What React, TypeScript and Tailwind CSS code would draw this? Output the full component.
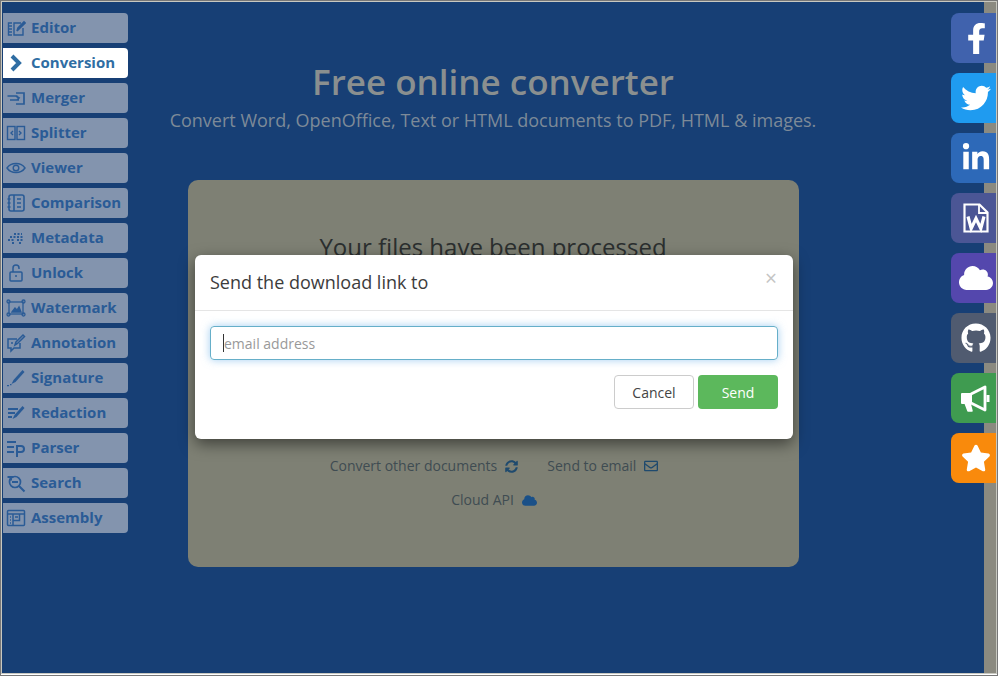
import React from 'react';
import { FaCloud, FaFacebookF, FaGithub, FaLinkedinIn, FaRegEnvelope, FaStar, FaSyncAlt, FaTwitter } from 'react-icons/fa';

const iconProps = { width: 20, height: 20, viewBox: '0 0 20 20', fill: 'none', stroke: 'currentColor', strokeWidth: 1.4 };

const navIcons: Record<string, React.ReactNode> = {
  Editor: (
    <svg {...iconProps}>
      <path d="M6 5H2.500v12H6M2.500 8H6M2.500 11H6M2.500 14H6" />
      <path d="M15 5H8v12h9v-7" />
      <path d="M11 13l1-3 6-6 1 1-6 6z" strokeWidth="1.600" />
    </svg>
  ),
  Conversion: (
    <svg width="20" height="20" viewBox="0 0 20 20" fill="none" stroke="currentColor" strokeWidth="4">
      <path d="M6 3l7 7-7 7" />
    </svg>
  ),
  Merger: (
    <svg {...iconProps} strokeWidth="1.700">
      <path d="M10 5h8v11h-8" />
      <path d="M1.500 8h10M4 12h9M10 8l3 2-2 2" />
    </svg>
  ),
  Splitter: (
    <svg {...iconProps}>
      <rect x="1.500" y="3.500" width="7.500" height="13" />
      <rect x="11" y="3.500" width="7.500" height="13" />
      <path d="M7 8l-2 2 2 2M13 8l2 2-2 2" />
    </svg>
  ),
  Viewer: (
    <svg {...iconProps}>
      <path d="M1 10c4-6 14-6 18 0-4 6-14 6-18 0z" />
      <circle cx="10" cy="10" r="2.800" />
    </svg>
  ),
  Comparison: (
    <svg {...iconProps} strokeWidth="1.600">
      <rect x="3" y="2" width="15" height="16" rx="2" />
      <path d="M8 2v16M11 6h4M11 10h4M11 14h4M1.500 6h3M1.500 10h3M1.500 14h3" />
    </svg>
  ),
  Metadata: (
    <svg {...iconProps} strokeWidth="2" strokeDasharray="2 1.500">
      <path d="M8 6h8M4 9h14M2 12h6M11 12h7M6 15h3M13 15h2" />
    </svg>
  ),
  Unlock: (
    <svg {...iconProps} strokeWidth="1.500">
      <rect x="4" y="9" width="12" height="9" rx="1" />
      <path d="M7 9V5a3 3 0 0 1 6 0v1M9 13h2" />
    </svg>
  ),
  Watermark: (
    <svg {...iconProps} strokeWidth="1.300">
      <rect x="3" y="4" width="14" height="12" />
      <path d="M6 14l3-4 2 2 2-3 2 5z" fill="currentColor" />
      <circle cx="2.500" cy="3.500" r="1.500" />
      <circle cx="17.500" cy="3.500" r="1.500" />
      <circle cx="2.500" cy="16.500" r="1.500" />
      <circle cx="17.500" cy="16.500" r="1.500" />
    </svg>
  ),
  Annotation: (
    <svg {...iconProps} strokeWidth="1.500">
      <path d="M11 6H2v9h3v3l3-3h6v-5" />
      <path d="M9 12l1-3 7-7 1.500 1.500-7 7z" />
      <path d="M5 10h2" />
    </svg>
  ),
  Signature: (
    <svg width="20" height="20" viewBox="0 0 20 20" fill="currentColor">
      <path d="M16.500 2l2 2-9 10-4 2 2-4z" />
      <path d="M1 17h2v1.300H1zM4 16h1.500v1.300H4z" />
    </svg>
  ),
  Redaction: (
    <svg width="20" height="20" viewBox="0 0 20 20" fill="currentColor">
      <path d="M2 5h10v2H2zM2 9h7v2H2zM2 13h4v2H2z" />
      <path d="M16.500 3l2 2-8 9-4 2 2-4z" />
    </svg>
  ),
  Parser: (
    <svg width="20" height="20" viewBox="0 0 20 20" fill="currentColor">
      <path d="M1 3h9v2H1zM1 8h7v2H1zM1 13h7v2H1z" />
      <path fillRule="evenodd" d="M10 7h5a4 4 0 0 1 0 8h-3v4h-2zm2 2v4h3a2 2 0 0 0 0-4z" />
    </svg>
  ),
  Search: (
    <svg {...iconProps} strokeWidth="1.700">
      <circle cx="9" cy="9" r="5.500" />
      <path d="M13 13l5.500 5.500M1.500 4h6M6 9h6M3 6.500h3" strokeWidth="2" />
    </svg>
  ),
  Assembly: (
    <svg {...iconProps} strokeWidth="1.500">
      <rect x="1.500" y="2.500" width="17" height="15" rx="1" />
      <path d="M1.500 6h17M7 6v11.500M13.500 6v6.500H7M4 9h1M4 12h1M4 15h1M9 9h3" />
    </svg>
  ),
};

const navItems = ['Editor', 'Conversion', 'Merger', 'Splitter', 'Viewer', 'Comparison', 'Metadata', 'Unlock', 'Watermark', 'Annotation', 'Signature', 'Redaction', 'Parser', 'Search', 'Assembly'];

const socials = [
  { color: 'bg-[#4062ad]', icon: <FaFacebookF size={31} /> },
  { color: 'bg-[#1f9bf0]', icon: <FaTwitter size={30} /> },
  { color: 'bg-[#2d69b8]', icon: <FaLinkedinIn size={30} /> },
  {
    color: 'bg-[#4b5695]',
    icon: (
      <svg width="26" height="30" viewBox="0 0 26 30" fill="none" stroke="white" strokeWidth="2.200">
        <path d="M1.500 1.500h15l8 8v19h-23z" />
        <path d="M16 1.500v8.500h8.500" strokeWidth="1.800" />
        <path d="M5 13.500l3.200 12 4.800-10 4.800 10 3.200-12" strokeWidth="3.200" />
      </svg>
    ),
  },
  { color: 'bg-[#5447ad]', icon: <FaCloud size={34} /> },
  { color: 'bg-[#505b70]', icon: <FaGithub size={30} /> },
  {
    color: 'bg-[#3f9b50]',
    icon: (
      <svg width="32" height="30" viewBox="0 0 32 30" fill="white" stroke="white" strokeLinejoin="round">
        <path d="M2 11h9v9H2z" strokeWidth="2" />
        <path d="M11 11l14-7v23l-14-7" fill="none" strokeWidth="2.800" />
        <path d="M5 20h5l2 8H8z" strokeWidth="1.500" />
        <path d="M28 12v7" fill="none" strokeWidth="3" />
      </svg>
    ),
  },
  { color: 'bg-[#f98a0c]', icon: <FaStar size={30} /> },
];

export default function App() {
  return (
    <div className="relative h-[676px] w-[998px] overflow-hidden border border-[#777] font-['Open_Sans',sans-serif]">
      <div className="flex h-[673px] w-[996px] border border-[#c8c8c0]">
        <div className="flex h-full flex-1 bg-[#173f75]">
          {/* Sidebar */}
          <nav className="flex w-[126px] shrink-0 flex-col gap-[5px] pl-px pt-[11px]">
            {navItems.map(name => {
              const active = name === 'Conversion';
              return (
                <div
                  key={name}
                  className={`flex h-[30px] items-center gap-[5px] rounded-r-[4px] pl-[3px] text-[15px] font-bold ${active ? 'bg-white text-[#2f6da3]' : 'bg-[#8394ae] text-[#2a5b96]'}`}
                >
                  <span className="flex w-[20px] justify-center">{navIcons[name]}</span>
                  <span className="pb-[2px]">{name}</span>
                </div>
              );
            })}
          </nav>

          {/* Main */}
          <main className="flex min-w-0 flex-1 flex-col items-center pt-[58px]">
            <h1 className="whitespace-nowrap text-center text-[35px] font-semibold leading-[44px] text-[#8a8f8f]">Free online converter</h1>
            <p className="mt-px whitespace-nowrap text-center text-[18px] leading-[30px] text-[#7d8a98]">Convert Word, OpenOffice, Text or HTML documents to PDF, HTML &amp; images.</p>
            <section className="mt-[45px] flex h-[387px] w-[611px] shrink-0 flex-col items-center rounded-[10px] bg-[#7e8074] pt-[50px]">
              <h2 className="text-[24px] leading-[34px] text-[#2b2f2f]">Your files have been processed</h2>
              <div className="mt-[192px] flex gap-[29px] pl-[2px] text-[14px] leading-[20px] text-[#3f4c52]">
                <span className="flex items-center gap-[8px]">Convert other documents <FaSyncAlt size={13} className="text-[#1f4a6e]" /></span>
                <span className="flex items-center gap-[8px]">Send to email <FaRegEnvelope size={14} className="text-[#1f4a6e]" /></span>
              </div>
              <div className="mt-[14px] flex items-center gap-[8px] pl-[2px] text-[14px] leading-[20px] text-[#3f4c52]">
                Cloud API <FaCloud size={15} className="text-[#1a5088]" />
              </div>
            </section>
          </main>

          <div className="w-[126px] shrink-0" />
        </div>

        {/* Scrollbar track */}
        <div className="h-full w-[12px] shrink-0 bg-[#8b8a80]" />
      </div>

      {/* Floating social buttons */}
      <div className="absolute left-[950px] top-[12px] flex flex-col gap-[10px]">
        {socials.map((s, i) => (
          <div key={i} className={`h-[50px] w-[45px] overflow-hidden rounded-l-[8px] text-white ${s.color}`}>
            <div className="flex h-[50px] w-[50px] items-center justify-center">{s.icon}</div>
          </div>
        ))}
      </div>

      {/* Modal */}
      <div className="absolute left-[194px] top-[254px] h-[184px] w-[598px] rounded-[6px] bg-white shadow-[0_5px_15px_rgba(0,0,0,0.5)]">
        <div className="flex h-[56px] items-center justify-between border-b border-[#e5e5e5] px-[15px]">
          <span className="text-[18px] text-[#3c3c3c]">Send the download link to</span>
          <span className="-mt-[8px] mr-[1px] text-[21px] leading-none text-[#c4c4c4]">×</span>
        </div>
        <div className="px-[15px] pt-[15px]">
          <div className="flex h-[34px] items-center rounded-[4px] border border-[#66afc9] pl-[12px] text-[14px] text-[#999] shadow-[0_0_8px_rgba(102,175,233,0.6)]">
            <span className="h-[18px] w-px bg-[#333]" />
            <span>email address</span>
          </div>
          <div className="mt-[15px] flex justify-end gap-[4px] text-[14px]">
            <button className="h-[34px] w-[80px] rounded-[4px] border border-[#ccc] bg-white text-[#444]">Cancel</button>
            <button className="h-[34px] w-[80px] rounded-[4px] bg-[#5cb85c] text-white">Send</button>
          </div>
        </div>
      </div>
    </div>
  );
}
